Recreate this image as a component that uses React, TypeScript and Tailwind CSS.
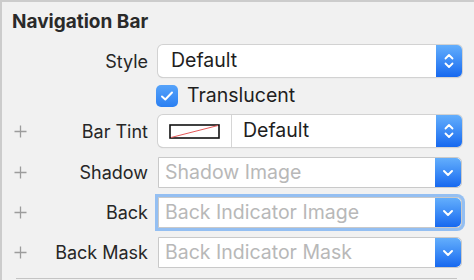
import React from "react";

const font = { fontFamily: "Inter, 'Noto Sans', sans-serif" };

function Stepper() {
  return (
    <div className="w-[26px] h-full flex items-center justify-center rounded-r-[5px] bg-gradient-to-b from-[#63aefc] to-[#1668ef]">
      <svg width="12" height="20" viewBox="0 0 12 20" fill="none" stroke="white" strokeWidth="1.8" strokeLinecap="round" strokeLinejoin="round">
        <path d="M2.5 7.5 L6 4 L9.5 7.5" />
        <path d="M2.5 12.5 L6 16 L9.5 12.5" />
      </svg>
    </div>
  );
}

function Chevron() {
  return (
    <div className="w-[26px] h-full flex items-center justify-center rounded-r-[5px] bg-gradient-to-b from-[#63aefc] to-[#1668ef]">
      <svg width="14" height="10" viewBox="0 0 14 10" fill="none" stroke="white" strokeWidth="2" strokeLinecap="round" strokeLinejoin="round">
        <path d="M3 3 L7 7 L11 3" />
      </svg>
    </div>
  );
}

function Label({ text, plus }: { text: string; plus?: boolean }) {
  return (
    <div className="w-[156px] h-full flex items-center">
      <div className="w-[32px] pl-[12px] flex items-center">
        {plus && (
          <svg width="13" height="13" viewBox="0 0 13 13" stroke="#9c9c9c" strokeWidth="1.3">
            <path d="M6.5 0.5 V12.5 M0.5 6.5 H12.5" />
          </svg>
        )}
      </div>
      <span className="ml-auto pr-[10px] text-[18px] text-[#262626]">{text}</span>
    </div>
  );
}

function Combo({ text, focused }: { text: string; focused?: boolean }) {
  return (
    <div
      className={`w-[304px] h-[31px] flex bg-white border border-[#c9c9c9] rounded-r-[5px] ${
        focused ? "ring-[3px] ring-[#94bff2]" : ""
      }`}
    >
      <span className="flex-1 pl-[6px] flex items-center text-[19.5px] text-[#b8b8b8] whitespace-nowrap">{text}</span>
      <Chevron />
    </div>
  );
}

export default function App() {
  return (
    <div className="w-[474px] h-[280px] bg-[#f1f1f1] border-t-2 border-l-2 border-[#cccccc] overflow-hidden" style={font}>
      <div className="pl-[10px] pt-[6px] text-[19px] font-bold text-[#2a2a2a] h-[43px]">Navigation Bar</div>

      <div className="flex flex-col">
        <div className="flex h-[32px] items-center">
          <Label text="Style" />
          <div className="w-[304px] h-[32px] flex bg-white rounded-[5px] shadow-[0_0_0_1px_#d2d2d2,0_1px_1px_#bdbdbd]">
            <span className="flex-1 pl-[13px] flex items-center text-[19.5px] text-[#1e1e1e]">Default</span>
            <Stepper />
          </div>
        </div>

        <div className="flex h-[36px] items-center mt-[1px]">
          <div className="w-[154px]" />
          <div className="w-[22px] h-[22px] rounded-[5px] bg-gradient-to-b from-[#56a3fa] to-[#2a7ff2] flex items-center justify-center">
            <svg width="14" height="12" viewBox="0 0 14 12" fill="none" stroke="white" strokeWidth="2" strokeLinecap="round" strokeLinejoin="round">
              <path d="M2 6.5 L5.3 9.5 L12 2.5" />
            </svg>
          </div>
          <span className="ml-[9px] text-[19.5px] text-[#1e1e1e]">Translucent</span>
        </div>

        <div className="flex h-[32px] items-center mt-[1px]">
          <Label text="Bar Tint" plus />
          <div className="w-[304px] h-[32px] flex bg-white rounded-[5px] shadow-[0_0_0_1px_#d2d2d2,0_1px_1px_#bdbdbd]">
            <div className="w-[74px] h-full flex items-center justify-center border-r border-[#d6d6d6]">
              <svg width="51" height="15" viewBox="0 0 51 15">
                <rect x="1" y="1" width="49" height="13" fill="white" stroke="#111" strokeWidth="1.6" />
                <line x1="2" y1="13.5" x2="49" y2="1.5" stroke="#e65a5a" strokeWidth="1" />
              </svg>
            </div>
            <span className="flex-1 pl-[11px] flex items-center text-[19.5px] text-[#1e1e1e]">Default</span>
            <Stepper />
          </div>
        </div>

        <div className="flex h-[31px] items-center mt-[10px]">
          <Label text="Shadow" plus />
          <Combo text="Shadow Image" />
        </div>

        <div className="flex h-[31px] items-center mt-[9px]">
          <Label text="Back" plus />
          <Combo text="Back Indicator Image" focused />
        </div>

        <div className="flex h-[31px] items-center mt-[9px]">
          <Label text="Back Mask" plus />
          <Combo text="Back Indicator Mask" />
        </div>
      </div>

      <div className="ml-[14px] mt-[10px] w-[441px] h-px bg-[#c4c4c4]" />
    </div>
  );
}
